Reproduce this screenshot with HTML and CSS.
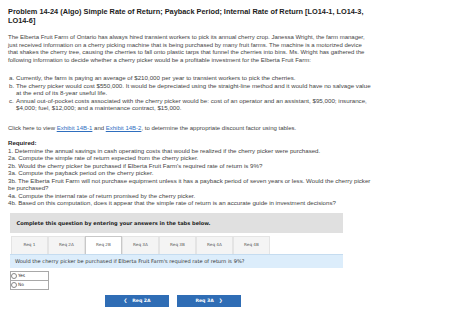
FILE: index.html
```html
<!DOCTYPE html>
<html>
<head>
<meta charset="utf-8">
<link rel="stylesheet" href="styles.css">
</head>
<body>
<div class="page">
  <h1 class="title">Problem 14-24 (Algo) Simple Rate of Return; Payback Period; Internal Rate of Return [LO14-1, LO14-3,<br>LO14-6]</h1>
  <p class="para">The Elberta Fruit Farm of Ontario has always hired transient workers to pick its annual cherry crop. Janessa Wright, the farm manager,<br>just received information on a cherry picking machine that is being purchased by many fruit farms. The machine is a motorized device<br>that shakes the cherry tree, causing the cherries to fall onto plastic tarps that funnel the cherries into bins. Ms. Wright has gathered the<br>following information to decide whether a cherry picker would be a profitable investment for the Elberta Fruit Farm:</p>
  <ol class="facts">
    <li><span class="mk">a.</span><span>Currently, the farm is paying an average of $210,000 per year to transient workers to pick the cherries.</span></li>
    <li><span class="mk">b.</span><span>The cherry picker would cost $550,000. It would be depreciated using the straight-line method and it would have no salvage value<br>at the end of its 8-year useful life.</span></li>
    <li><span class="mk">c.</span><span>Annual out-of-pocket costs associated with the cherry picker would be: cost of an operator and an assistant, $95,000; insurance,<br>$4,000; fuel, $12,000; and a maintenance contract, $15,000.</span></li>
  </ol>
  <p class="click">Click here to view <a class="lnk">Exhibit 14B-1</a> and <a class="lnk">Exhibit 14B-2</a>, to determine the appropriate discount factor using tables.</p>
  <div class="req">
    <div class="req-h">Required:</div>
    <div>1. Determine the annual savings in cash operating costs that would be realized if the cherry picker were purchased.</div>
    <div>2a. Compute the simple rate of return expected from the cherry picker.</div>
    <div>2b. Would the cherry picker be purchased if Elberta Fruit Farm's required rate of return is 9%?</div>
    <div>3a. Compute the payback period on the cherry picker.</div>
    <div>3b. The Elberta Fruit Farm will not purchase equipment unless it has a payback period of seven years or less. Would the cherry picker<br>be purchased?</div>
    <div>4a. Compute the internal rate of return promised by the cherry picker.</div>
    <div>4b. Based on this computation, does it appear that the simple rate of return is an accurate guide in investment decisions?</div>
  </div>
  <div class="widget">
    <div class="banner">Complete this question by entering your answers in the tabs below.</div>
    <div class="tabs">
      <div class="tab">Req 1</div>
      <div class="tab">Req 2A</div>
      <div class="tab active">Req 2B</div>
      <div class="tab">Req 3A</div>
      <div class="tab">Req 3B</div>
      <div class="tab">Req 4A</div>
      <div class="tab">Req 4B</div>
    </div>
    <div class="question">Would the cherry picker be purchased if Elberta Fruit Farm's required rate of return is 9%?</div>
    <div class="choices">
      <label class="choice"><span class="radio"></span>Yes</label>
      <label class="choice"><span class="radio"></span>No</label>
    </div>
    <div class="nav">
      <button class="btn"><span class="chev">&#x276E;</span>Req 2A</button>
      <button class="btn">Req 3A<span class="chev r">&#x276F;</span></button>
    </div>
  </div>
</div>
</body>
</html>
```

FILE: styles.css
```css
html, body {
  margin: 0;
  padding: 0;
  background: #fff;
}
.page {
  padding: 8px 8px 0 8px;
  font-family: "Liberation Sans", Arial, sans-serif;
  color: #444;
  font-size: 6px;
  line-height: 7.5px;
}
.title {
  margin: 0;
  font-size: 7.35px;
  line-height: 8.5px;
  font-weight: bold;
  color: #1c1c1c;
  white-space: nowrap;
}
.para {
  margin: 9px 0 0 0;
  white-space: nowrap;
}
.facts {
  list-style: none;
  margin: 10px 0 0 0;
  padding: 0;
  white-space: nowrap;
  font-size: 6.2px;
}
.facts li {
  display: flex;
}
.mk {
  width: 7px;
  padding-left: 1px;
  flex: none;
}
.click {
  margin: 13.5px 0 0 0;
  white-space: nowrap;
}
.lnk {
  color: #2f6fbf;
  text-decoration: underline;
}
.req {
  margin-top: 6.5px;
  white-space: nowrap;
  font-size: 6.13px;
}
.req-h {
  font-weight: bold;
  color: #222;
}
.widget {
  margin: 6px 0 0 2px;
  width: 333px;
  font-family: "DejaVu Sans", Verdana, sans-serif;
}
.banner {
  background: #e0e0e0;
  height: 20px;
  line-height: 20px;
  padding-left: 6.5px;
  font-size: 5.07px;
  font-weight: bold;
  color: #222;
  white-space: nowrap;
}
.tabs {
  display: flex;
  margin-top: 3px;
  padding-left: 1px;
}
.tab {
  width: 37px;
  height: 18px;
  box-sizing: border-box;
  background: #f4f4f4;
  border: 1px solid #e4e4e4;
  border-bottom: none;
  font-size: 4.2px;
  color: #555;
  display: flex;
  align-items: center;
  justify-content: center;
}
.tab.active {
  background: #fff;
  border-color: #c8c8c8;
}
.question {
  background: #dcedfb;
  border-top: 1px solid #c5dcf0;
  height: 14px;
  box-sizing: border-box;
  line-height: 13px;
  padding-left: 5px;
  font-size: 5.1px;
  color: #333;
  white-space: nowrap;
}
.choices {
  margin-top: 3px;
  width: 39px;
  border: 1px solid #a8a8a8;
  box-sizing: border-box;
}
.choice {
  display: flex;
  align-items: center;
  height: 8px;
  font-size: 4.4px;
  color: #333;
}
.choice + .choice {
  border-top: 1px solid #a8a8a8;
}
.radio {
  width: 6px;
  height: 6px;
  border: 1px solid #888;
  border-radius: 50%;
  background: #fff;
  margin-right: 1px;
  box-sizing: border-box;
}
.nav {
  display: flex;
  gap: 8px;
  margin: 5px 0 0 95px;
}
.btn {
  width: 64px;
  height: 12px;
  padding: 0;
  border: none;
  background: #2f6db5;
  color: #fff;
  font-family: "DejaVu Sans", Verdana, sans-serif;
  font-size: 4.6px;
  font-weight: bold;
  display: flex;
  align-items: center;
  justify-content: center;
}
.chev {
  font-size: 4.6px;
  margin-right: 5px;
}
.chev.r {
  margin-right: 0;
  margin-left: 5px;
}
```
